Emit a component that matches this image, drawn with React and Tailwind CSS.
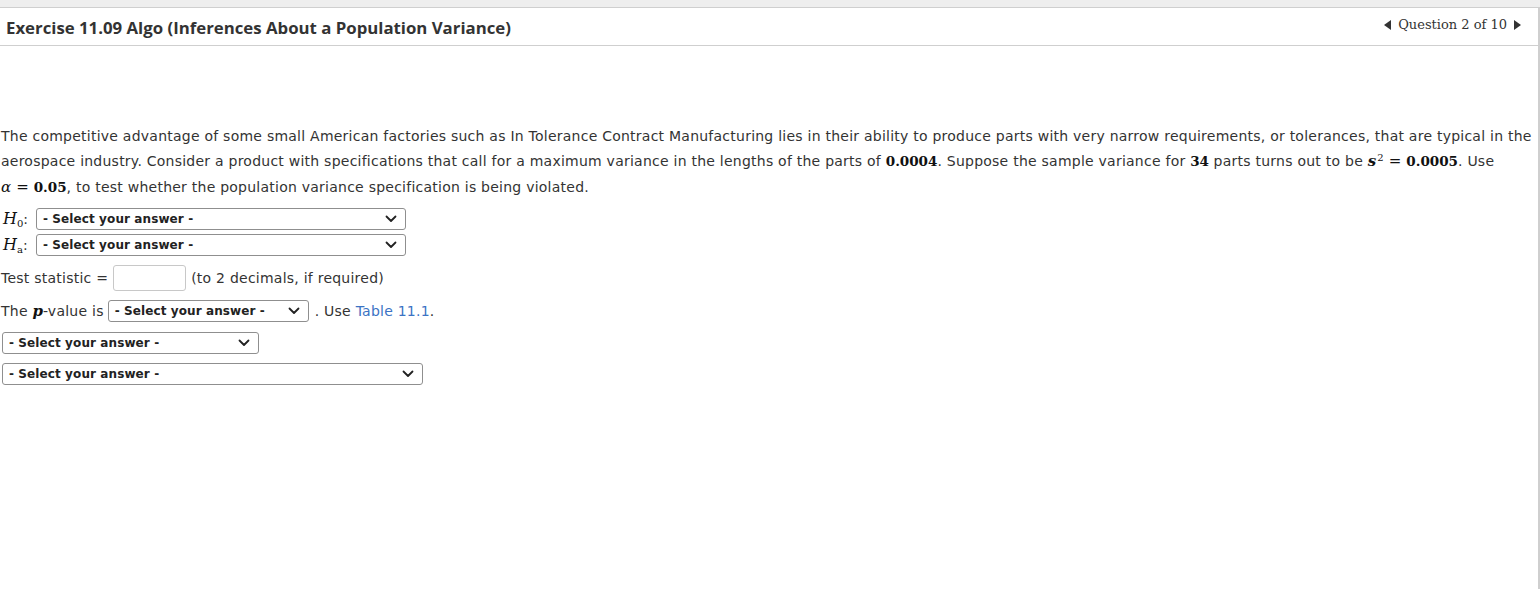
import React from 'react';

const Chevron = () => (
  <svg width="12" height="8" viewBox="0 0 12 8" className="shrink-0">
    <path d="M1.5 1.5 L6 6 L10.5 1.5" fill="none" stroke="#222" strokeWidth="1.8" strokeLinecap="round" strokeLinejoin="round" />
  </svg>
);

const Select = ({ width }) => (
  <span
    className={`inline-flex items-center justify-between h-[22px] border border-[#8f8f8f] rounded-[3px] bg-white pl-[6px] pr-[8px] align-middle font-bold text-[12px] tracking-[0.1px] text-[#222] ${width}`}
  >
    <span>- Select your answer -</span>
    <Chevron />
  </span>
);

const Num = ({ children }) => (
  <span className="font-['DejaVu_Serif',serif] font-bold text-[13.5px] tracking-normal text-[#111]">{children}</span>
);

const Serif = ({ children, className = '' }) => (
  <span className={`font-['DejaVu_Serif',serif] tracking-normal text-[#111] ${className}`}>{children}</span>
);

const Triangle = ({ dir }) => (
  <svg width="7" height="10" viewBox="0 0 7 10">
    {dir === 'left' ? <path d="M7 0 L0 5 L7 10 Z" fill="#333" /> : <path d="M0 0 L7 5 L0 10 Z" fill="#333" />}
  </svg>
);

const HypothesisRow = ({ sub }) => (
  <div className="h-[23px] flex items-center gap-[4px]">
    <span className="w-[31px] pl-[2px] tracking-normal leading-none">
      <Serif className="italic text-[16px]">H</Serif>
      <Serif className="text-[10px] relative top-[3px]">{sub}</Serif>:
    </span>
    <Select width="w-[370px]" />
  </div>
);

export default function App() {
  return (
    <div className="w-[1540px] h-[589px] bg-white overflow-hidden font-['DejaVu_Sans',Verdana,sans-serif] text-[#333]">
      <div className="h-[8px] bg-[#eeeeee] border-b border-[#cfcfcf]" />
      <div className="flex flex-col h-[581px] border-r-2 border-[#cfcfcf]">
        <div className="h-[38px] flex items-center justify-between border-b border-[#cfcfcf] pl-[6px] pr-[17px]">
          <h1 className="font-['Open_Sans',sans-serif] font-bold text-[16.8px] text-[#333] pt-[2px]">
            Exercise 11.09 Algo (Inferences About a Population Variance)
          </h1>
          <div className="flex items-center gap-[7px] font-['DejaVu_Serif',serif] text-[13px] text-[#333] mb-[3px]">
            <Triangle dir="left" />
            <span>Question 2 of 10</span>
            <Triangle dir="right" />
          </div>
        </div>

        <div className="pt-[78px] pl-[1px] text-[14px] tracking-[0.24px]">
          <p className="leading-[25px]">
            The competitive advantage of some small American factories such as In Tolerance Contract Manufacturing lies in their ability to produce parts with very narrow requirements, or tolerances, that are typical in the aerospace industry. Consider a product with specifications that call for a maximum variance in the lengths of the parts of <Num>0.0004</Num>. Suppose the sample variance for <Num>34</Num> parts turns out to be{' '}
            <span className="whitespace-nowrap">
              <Serif className="font-bold italic text-[15px]">s</Serif>
              <span className="font-['DejaVu_Serif',serif] text-[10px] text-[#111] relative -top-[5px] ml-[1px]">2</span>
              <Serif className="text-[15px] mx-[5px]">=</Serif>
              <Num>0.0005</Num>
            </span>
            . Use{' '}
            <span className="whitespace-nowrap">
              <Serif className="italic text-[15px]">α</Serif>
              <Serif className="text-[15px] mx-[5px]">=</Serif>
              <Num>0.05</Num>
            </span>
            , to test whether the population variance specification is being violated.
          </p>

          <div className="mt-[7px] flex flex-col gap-[3px]">
            <HypothesisRow sub="0" />
            <HypothesisRow sub="a" />
          </div>

          <div className="mt-[9px] flex items-center gap-[5px]">
            <span>Test statistic =</span>
            <span className="inline-block w-[73px] h-[26px] border border-[#c8c8c8] rounded-[3px] bg-white" />
            <span>(to 2 decimals, if required)</span>
          </div>

          <div className="mt-[9px] flex items-center gap-[4px]">
            <span>
              The <Serif className="font-bold italic text-[15px]">p</Serif>-value is
            </span>
            <Select width="w-[201px]" />
            <span className="ml-[2px]">
              . Use <span className="text-[#3b73c4]">Table 11.1</span>.
            </span>
          </div>

          <div className="mt-[9px] pl-[1px]">
            <Select width="w-[257px]" />
          </div>
          <div className="mt-[9px] pl-[1px]">
            <Select width="w-[421px]" />
          </div>
        </div>
      </div>
    </div>
  );
}
